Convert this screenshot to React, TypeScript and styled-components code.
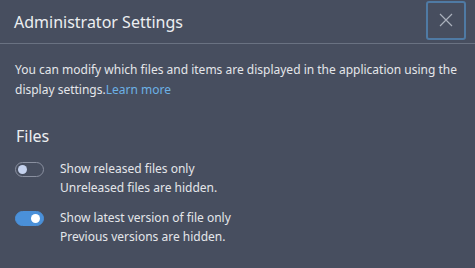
import React, { useState } from "react";
import styled, { createGlobalStyle } from "styled-components";

const GlobalStyle = createGlobalStyle`
	html, body {
		margin: 0;
		padding: 0;
		background: #474e5f;
	}
	body {
		font-family: "Noto Sans", "Open Sans", sans-serif;
		color: #e4e6ea;
	}
`;

const Dialog = styled.div`
	width: 475px;
	height: 268px;
	background: #474e5f;
	display: flex;
	flex-direction: column;
`;

const Header = styled.div`
	height: 44px;
	display: flex;
	align-items: center;
	justify-content: space-between;
	padding: 0 9px 0 14px;
	border-bottom: 1px solid #6a7282;
	box-sizing: border-box;
`;

const Title = styled.h1`
	margin: 0;
	font-size: 16px;
	font-weight: 400;
	color: #eceef1;
`;

const CloseButton = styled.button`
	width: 40px;
	height: 39px;
	margin-top: -3px;
	border: 2px solid #4f7aa4;
	border-radius: 3px;
	background: transparent;
	display: flex;
	align-items: center;
	justify-content: center;
	padding: 0;
	cursor: pointer;
`;

const Body = styled.div`
	padding: 16px 15px 0 15px;
	display: flex;
	flex-direction: column;
`;

const Intro = styled.p`
	margin: 0;
	font-size: 12px;
	line-height: 20px;
`;

const Link = styled.a`
	color: #6cb1e6;
	text-decoration: none;
`;

const SectionTitle = styled.h2`
	margin: 25px 0 12px 1px;
	font-size: 16px;
	font-weight: 400;
	color: #eceef1;
`;

const OptionList = styled.div`
	display: flex;
	flex-direction: column;
	gap: 11px;
`;

const Option = styled.div`
	display: flex;
	align-items: flex-start;
	gap: 16px;
`;

const Track = styled.button<{ $on: boolean }>`
	width: 29px;
	height: 15px;
	margin-top: 3px;
	flex: none;
	box-sizing: border-box;
	border-radius: 8px;
	padding: 0;
	position: relative;
	cursor: pointer;
	border: 1.5px solid ${(p) => (p.$on ? "#4a90d9" : "#8a90a0")};
	background: ${(p) => (p.$on ? "#4a90d9" : "transparent")};
`;

const Knob = styled.span<{ $on: boolean }>`
	position: absolute;
	top: 50%;
	width: 9px;
	height: 9px;
	margin-top: -4.5px;
	border-radius: 50%;
	left: ${(p) => (p.$on ? "15px" : "2px")};
	background: ${(p) => (p.$on ? "#ffffff" : "#c5d2ee")};
`;

const OptionText = styled.div`
	display: flex;
	flex-direction: column;
	font-size: 12px;
	line-height: 19px;
`;

const Toggle: React.FC<{ on: boolean; onChange: () => void }> = ({ on, onChange }) => (
	<Track $on={on} onClick={onChange}>
		<Knob $on={on} />
	</Track>
);

export default function App() {
	const [released, setReleased] = useState(false);
	const [latest, setLatest] = useState(true);

	return (
		<Dialog>
			<GlobalStyle />
			<Header>
				<Title>Administrator Settings</Title>
				<CloseButton aria-label="Close">
					<svg width="14" height="14" viewBox="0 0 14 14">
						<path d="M1 1L13 13M13 1L1 13" stroke="#aab0bc" strokeWidth="1.2" />
					</svg>
				</CloseButton>
			</Header>
			<Body>
				<Intro>
					You can modify which files and items are displayed in the application using the
					display settings.<Link href="#">Learn more</Link>
				</Intro>
				<SectionTitle>Files</SectionTitle>
				<OptionList>
					<Option>
						<Toggle on={released} onChange={() => setReleased(!released)} />
						<OptionText>
							<span>Show released files only</span>
							<span>Unreleased files are hidden.</span>
						</OptionText>
					</Option>
					<Option>
						<Toggle on={latest} onChange={() => setLatest(!latest)} />
						<OptionText>
							<span>Show latest version of file only</span>
							<span>Previous versions are hidden.</span>
						</OptionText>
					</Option>
				</OptionList>
			</Body>
		</Dialog>
	);
}
